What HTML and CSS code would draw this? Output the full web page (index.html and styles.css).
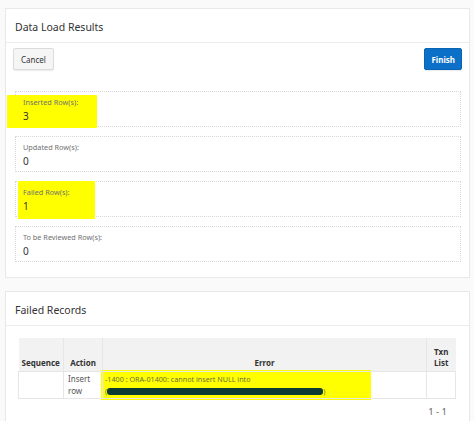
FILE: index.html
```html
<!DOCTYPE html>
<html lang="en">
<head>
    <meta charset="UTF-8">
    <title>Data Load Results</title>
    <link rel="stylesheet" href="styles.css">
</head>
<body>
    <div class="region results">
        <div class="region-header">
            <h2>Data Load Results</h2>
        </div>
        <div class="button-bar">
            <button class="btn">Cancel</button>
            <button class="btn btn-hot">Finish</button>
        </div>
        <div class="fields">
            <div class="field">
                <span class="mark mark-inserted"></span>
                <label>Inserted Row(s):</label>
                <span class="value">3</span>
            </div>
            <div class="field">
                <label>Updated Row(s):</label>
                <span class="value">0</span>
            </div>
            <div class="field">
                <span class="mark mark-failed"></span>
                <label>Failed Row(s):</label>
                <span class="value">1</span>
            </div>
            <div class="field">
                <label>To be Reviewed Row(s):</label>
                <span class="value">0</span>
            </div>
        </div>
    </div>

    <div class="region failed">
        <div class="region-header">
            <h2>Failed Records</h2>
        </div>
        <div class="report">
            <table>
                <colgroup>
                    <col class="col-seq">
                    <col class="col-action">
                    <col>
                    <col class="col-txn">
                </colgroup>
                <thead>
                    <tr>
                        <th>Sequence</th>
                        <th>Action</th>
                        <th>Error</th>
                        <th>Txn<br>List</th>
                    </tr>
                </thead>
                <tbody>
                    <tr>
                        <td></td>
                        <td>Insert<br>row</td>
                        <td class="error-cell">
                            <div class="error-mark">
                                -1400 : ORA-01400: cannot insert NULL into<br>
                                (<span class="redacted"></span>)
                            </div>
                        </td>
                        <td></td>
                    </tr>
                </tbody>
            </table>
            <div class="pagination">1 - 1</div>
        </div>
    </div>
</body>
</html>
```

FILE: styles.css
```css
body {
    margin: 0;
    padding: 8px 4px 0 5px;
    background-color: #fafafa;
    font-family: 'Noto Sans', 'Open Sans', sans-serif;
    color: #404040;
    height: 421px;
    overflow: hidden;
    box-sizing: border-box;
}

.region {
    background-color: #fff;
    border: 1px solid #e8e8e8;
    box-sizing: border-box;
}

.results {
    height: 270px;
}

.failed {
    margin-top: 13px;
    height: 140px;
}

.region-header {
    height: 34px;
    display: flex;
    align-items: center;
    padding-left: 9px;
    border-bottom: 1px solid #ececec;
    padding-top: 3px;
    box-sizing: border-box;
}

.region-header h2 {
    margin: 0;
    font-size: 10.5px;
    font-weight: normal;
    color: #333;
}

.button-bar {
    display: flex;
    justify-content: space-between;
    padding: 5px 7px 0 7px;
}

.btn {
    height: 22px;
    padding: 0 7px;
    font-family: inherit;
    font-size: 8px;
    color: #333;
    background-color: #f5f5f5;
    border: 1px solid #dcdcdc;
    border-radius: 2px;
    box-shadow: 0 1px 1px rgba(0, 0, 0, 0.08);
}

.btn-hot {
    padding: 0 6px;
    background-color: #0c70c8;
    border-color: #0a64b4;
    color: #fff;
    font-weight: bold;
}

.fields {
    display: flex;
    flex-direction: column;
    gap: 9px;
    padding: 21px 8px 0 9px;
}

.field {
    position: relative;
    height: 36px;
    border: 1px dotted #d8d8d8;
    padding: 5px 9px 0 7px;
    box-sizing: border-box;
    display: flex;
    flex-direction: column;
}

.field label {
    position: relative;
    font-size: 7.3px;
    color: #707070;
    line-height: 11px;
}

.field .value {
    position: relative;
    font-size: 10px;
    color: #333;
    line-height: 14px;
    margin-top: 1px;
}

.mark {
    position: absolute;
    background-color: #ffff00;
}

.mark-inserted {
    left: -9px;
    top: 3px;
    width: 90px;
    height: 33px;
}

.mark-failed {
    left: 2px;
    top: -1px;
    width: 77px;
    height: 38px;
}

.report {
    padding: 12px 13px 0 12px;
}

table {
    width: 100%;
    table-layout: fixed;
    border-collapse: collapse;
    font-size: 8px;
    color: #555;
}

.col-seq {
    width: 45px;
}

.col-action {
    width: 39px;
}

.col-txn {
    width: 29px;
}

th {
    background-color: #f2f2f2;
    height: 33px;
    box-sizing: border-box;
    vertical-align: bottom;
    padding: 0 3px 3px;
    font-weight: bold;
    color: #333;
    border-left: 1px solid #e6e6e6;
    line-height: 11px;
}

th:first-child {
    border-left: none;
}

td {
    height: 27px;
    box-sizing: border-box;
    border: 1px solid #e6e6e6;
    padding: 1px 4px 0;
    vertical-align: top;
    line-height: 12px;
}

.error-cell {
    padding: 0;
    font-size: 7.2px;
}

.error-mark {
    background-color: #ffff00;
    width: 270px;
    height: 30px;
    margin: -2px 0 -4px -2px;
    padding: 3px 3px 0 4px;
    color: #6f6f3c;
    box-sizing: border-box;
    line-height: 12px;
}

.redacted {
    display: inline-block;
    width: 216px;
    height: 7px;
    border-radius: 3px;
    background-color: #0b3b32;
    vertical-align: -1px;
}

.pagination {
    text-align: right;
    font-size: 9.5px;
    color: #666;
    padding: 6px 9px 0 0;
}
```
